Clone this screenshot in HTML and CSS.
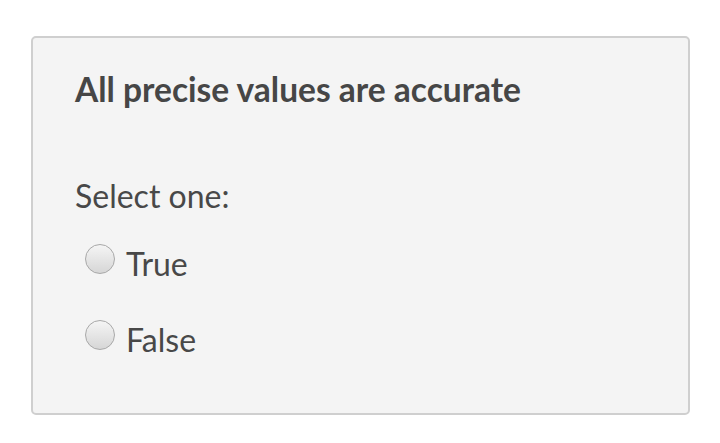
FILE: index.html
```html
<!DOCTYPE html>
<html>
<head>
<meta charset="utf-8">
<link rel="stylesheet" href="styles.css">
</head>
<body>
<div class="card">
  <h2 class="title">All precise values are accurate</h2>
  <div class="prompt">Select one:</div>
  <div class="options">
    <label class="option"><span class="radio"></span><span class="label">True</span></label>
    <label class="option"><span class="radio"></span><span class="label">False</span></label>
  </div>
</div>
</body>
</html>
```
FILE: styles.css
```css
html, body {
  margin: 0;
  padding: 0;
  background: #ffffff;
}
body {
  font-family: Lato, "Open Sans", sans-serif;
  color: #484848;
}
.card {
  box-sizing: border-box;
  margin: 36px 0 0 31px;
  width: 659px;
  height: 379px;
  background: #f4f4f4;
  border: 2px solid #cfcfcf;
  border-radius: 5px;
  padding: 0 0 0 42px;
}
.title {
  margin: 0;
  padding-top: 31px;
  font-size: 33.5px;
  line-height: 40px;
  font-weight: 700;
  color: #464646;
}
.prompt {
  margin-top: 69px;
  font-size: 32px;
  line-height: 36px;
}
.options {
  display: flex;
  flex-direction: column;
  gap: 40px;
  margin-top: 32px;
  padding-left: 10px;
}
.option {
  display: flex;
  align-items: center;
  height: 36px;
}
.radio {
  box-sizing: border-box;
  width: 30px;
  height: 30px;
  border-radius: 50%;
  border: 1px solid #a8a8a8;
  background: linear-gradient(#f5f5f5, #d6d6d6);
  margin-right: 11px;
  margin-top: -11px;
}
.label {
  font-size: 32px;
  line-height: 36px;
}
```
